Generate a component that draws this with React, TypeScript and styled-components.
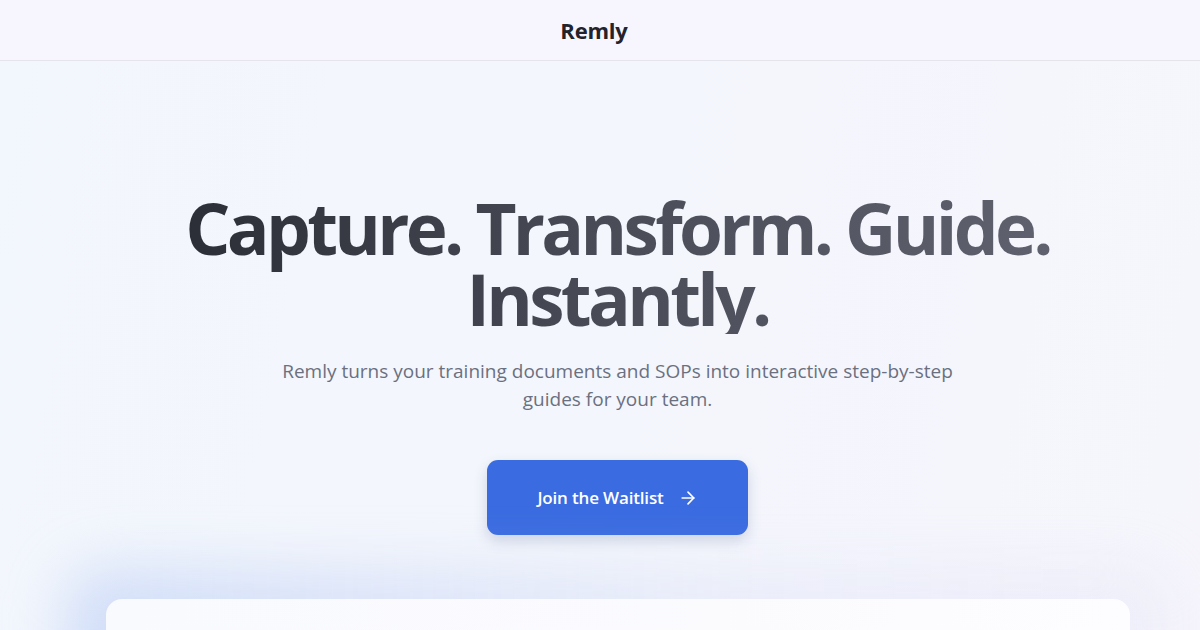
import styled, { createGlobalStyle } from "styled-components";

const GlobalStyle = createGlobalStyle`
    * { box-sizing: border-box; }
    html, body {
        margin: 0;
        padding: 0;
        background: #f3f6fc;
        font-family: "Open Sans", "Noto Sans", sans-serif;
        overflow: hidden;
    }
`;

const Page = styled.div`
    height: 630px;
    overflow: hidden;
    background: linear-gradient(100deg, #f2f6fd 0%, #f4f6fc 60%, #f6f5fc 100%);
`;

const Header = styled.header`
    height: 61px;
    display: flex;
    align-items: center;
    justify-content: center;
    padding-right: 12px;
    background: #f7f5fd;
    border-bottom: 1px solid #e4e4ea;
`;

const Brand = styled.h1`
    margin: 0;
    font-size: 22px;
    font-weight: 700;
    color: #22232b;
    letter-spacing: -0.01em;
`;

const Hero = styled.main`
    display: flex;
    flex-direction: column;
    align-items: center;
    padding: 131px 0 0 35px;
    text-align: center;
`;

const Headline = styled.h2`
    margin: 0;
    font-size: 71px;
    font-weight: 700;
    line-height: 71px;
    letter-spacing: -0.052em;
    background: linear-gradient(90deg, #2c2e37 0%, #4a4c58 50%, #5f616e 100%);
    -webkit-background-clip: text;
    background-clip: text;
    color: transparent;
`;

const Lead = styled.p`
    margin: 23px 0 0;
    max-width: 680px;
    font-size: 19px;
    line-height: 28px;
    color: #6b7080;
`;

const CtaButton = styled.button`
    margin-top: 47px;
    height: 75px;
    padding: 0 50px;
    display: flex;
    align-items: center;
    gap: 14px;
    border: none;
    border-radius: 11px;
    background: #3a6be0;
    color: #fff;
    font-family: inherit;
    font-size: 17px;
    font-weight: 600;
    letter-spacing: -0.01em;
    box-shadow: 0 6px 14px rgba(40, 60, 120, 0.18);
    cursor: pointer;
`;

const PreviewWrap = styled.div`
    position: relative;
    margin-top: 64px;
    width: 1024px;
`;

const Glow = styled.div`
    position: absolute;
    inset: -30px -40px -40px -40px;
    border-radius: 40px;
    background: linear-gradient(90deg, rgba(180, 200, 245, 0.55), rgba(215, 220, 245, 0.35) 60%, rgba(225, 225, 245, 0.3));
    filter: blur(28px);
`;

const PreviewCard = styled.div`
    position: relative;
    height: 200px;
    border-radius: 16px;
    background: linear-gradient(90deg, #f9fafe, #fbfbfe 60%, #fdfcfe);
`;

export default function App() {
    return (
        <Page>
            <GlobalStyle />
            <Header>
                <Brand>Remly</Brand>
            </Header>
            <Hero>
                <Headline>
                    Capture. Transform. Guide.
                    <br />
                    Instantly.
                </Headline>
                <Lead>
                    Remly turns your training documents and SOPs into interactive step-by-step guides for your team.
                </Lead>
                <CtaButton>
                    Join the Waitlist
                    <svg width="20" height="20" viewBox="0 0 24 24" fill="none" stroke="currentColor" strokeWidth="2" strokeLinecap="round" strokeLinejoin="round">
                        <path d="M5 12h14" />
                        <path d="m12 5 7 7-7 7" />
                    </svg>
                </CtaButton>
                <PreviewWrap>
                    <Glow />
                    <PreviewCard />
                </PreviewWrap>
            </Hero>
        </Page>
    );
}
